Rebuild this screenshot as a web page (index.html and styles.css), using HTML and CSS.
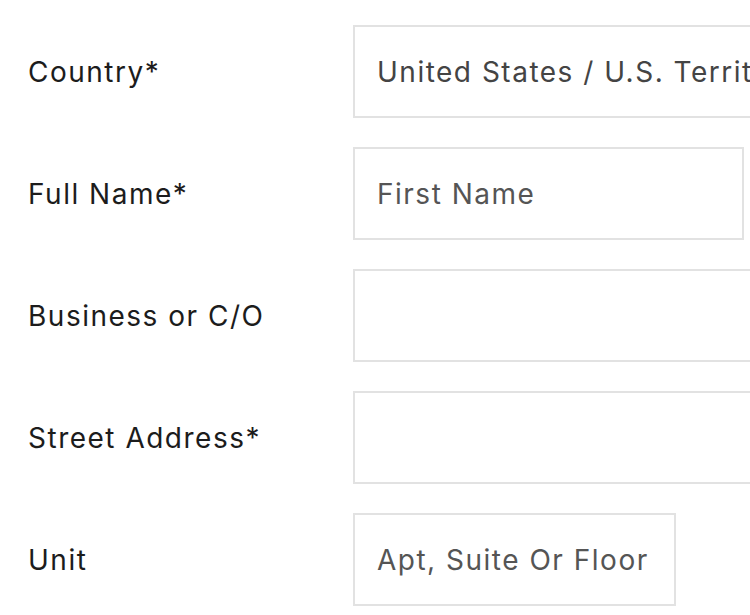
FILE: index.html
```html
<!DOCTYPE html>
<html lang="en">
<head>
  <meta charset="UTF-8" />
  <meta name="viewport" content="width=device-width, initial-scale=1.0" />
  <title>Shipping Address</title>
  <link rel="stylesheet" href="styles.css">
</head>
<body>
  <!-- Address form: label column + field column -->
  <form class="address-form">
    <div class="form-row">
      <label class="field-label" for="country">Country*</label>
      <div class="field field-wide" id="country">United States / U.S. Territories</div>
    </div>
    <div class="form-row">
      <label class="field-label" for="firstName">Full Name*</label>
      <div class="field field-name placeholder" id="firstName">First Name</div>
    </div>
    <div class="form-row">
      <label class="field-label" for="business">Business or C/O</label>
      <div class="field field-wide" id="business"></div>
    </div>
    <div class="form-row">
      <label class="field-label" for="street">Street Address*</label>
      <div class="field field-wide" id="street"></div>
    </div>
    <div class="form-row">
      <label class="field-label" for="unit">Unit</label>
      <div class="field field-unit placeholder" id="unit">Apt, Suite Or Floor</div>
    </div>
  </form>
</body>
</html>
```

FILE: styles.css
```css
body {
  margin: 0;
  background-color: #fff;
  font-family: Inter, "Liberation Sans", sans-serif;
  overflow: hidden;
}
/* Two columns: labels on the left, boxes from x=353 */
.address-form {
  display: flex;
  flex-direction: column;
  gap: 29px;
  padding: 25px 0 0 28px;
  width: 1000px;
}
.form-row {
  display: grid;
  grid-template-columns: 325px auto;
  align-items: center;
}
.field-label {
  font-size: 28px;
  letter-spacing: 1.5px;
  color: #1c1c1c;
}
/* Input boxes */
.field {
  box-sizing: border-box;
  height: 93px;
  border: 2px solid #e2e2e2;
  padding: 0 22px;
  display: flex;
  align-items: center;
  font-size: 28px;
  letter-spacing: 1.5px;
  color: #444;
  white-space: nowrap;
  overflow: hidden;
}
.placeholder {
  color: #555;
}
.field-wide {
  width: 520px;
}
.field-name {
  width: 391px;
}
.field-unit {
  width: 323px;
}
```
